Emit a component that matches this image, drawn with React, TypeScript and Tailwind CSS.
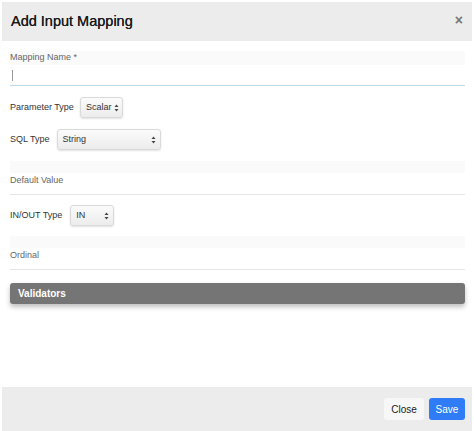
import React from "react";

function Arrows() {
  return (
    <svg width="5" height="8" viewBox="0 0 5 8" className="shrink-0">
      <path d="M2.5 0.5 L4.5 3 L0.5 3 Z" fill="#444" />
      <path d="M2.5 7.5 L4.5 5 L0.5 5 Z" fill="#444" />
    </svg>
  );
}

function Select({ value, w }: { value: string; w: string }) {
  return (
    <div
      className={`${w} h-[21px] shrink-0 flex items-center justify-between gap-[3px] pl-[5px] pr-[4px] rounded-[3px] border border-[#d9d9d9] bg-gradient-to-b from-[#fbfbfb] to-[#ececec] shadow-[0_1px_2px_rgba(0,0,0,0.12)] text-[9px] text-[#333]`}
    >
      <span className="whitespace-nowrap">{value}</span>
      <Arrows />
    </div>
  );
}

export default function App() {
  return (
    <div
      className="w-[474px] h-[431px] bg-white flex flex-col pt-[2px] px-[2px] text-[#444]"
      style={{ fontFamily: '"Liberation Sans", Arial, sans-serif' }}
    >
      <div className="h-[39px] shrink-0 bg-[#ececec] flex items-center justify-between pl-[9px] pr-[9px]">
        <span className="text-[14.5px] text-[#1a1a1a] [text-shadow:0_0_0.4px_#1a1a1a]">Add Input Mapping</span>
        <span className="text-[14px] font-bold text-[#777] leading-none -mt-[4px]">×</span>
      </div>

      <div className="flex-1 flex flex-col pl-[8px] pr-[7px]">
        <div className="mt-[10px] h-[14px] bg-[#fafafa] flex items-center text-[9px] text-[#666]">
          Mapping Name *
        </div>
        <div className="h-[21px] border-b border-[#bcdcee] flex items-center pl-[2px]">
          <div className="w-px h-[11px] bg-[#999]" />
        </div>

        <div className="mt-[11px] h-[21px] flex items-center gap-[6px] text-[9px] text-[#333]">
          <span>Parameter Type</span>
          <Select value="Scalar" w="w-[43px]" />
        </div>

        <div className="mt-[11px] h-[21px] flex items-center gap-[7px] text-[9px] text-[#333]">
          <span>SQL Type</span>
          <Select value="String" w="w-[104px]" />
        </div>

        <div className="mt-[11px] h-[12px] bg-[#fafafa]" />
        <div className="h-[22px] border-b border-[#e6e6e6] flex items-center pb-[5px] text-[9px] text-[#666]">
          Default Value
        </div>

        <div className="mt-[10px] h-[21px] flex items-center gap-[8px] text-[9px] text-[#333]">
          <span>IN/OUT Type</span>
          <Select value="IN" w="w-[44px]" />
        </div>

        <div className="mt-[10px] h-[12px] bg-[#fafafa]" />
        <div className="h-[22px] border-b border-[#e6e6e6] flex items-center pb-[5px] text-[9px] text-[#666]">
          Ordinal
        </div>

        <div className="mt-[13px] h-[21px] bg-[#757575] rounded-[3px] shadow-[0_3px_5px_rgba(0,0,0,0.25)] flex items-center pl-[8px] text-[10px] font-bold text-white">
          Validators
        </div>
      </div>

      <div className="h-[44px] shrink-0 bg-[#ececec] flex items-center justify-end gap-[5px] pr-[7px]">
        <div className="w-[40px] h-[22px] bg-[#f7f7f7] rounded-[3px] flex items-center justify-center text-[10px] text-[#222]">
          Close
        </div>
        <div className="w-[36px] h-[22px] bg-[#2f7cf6] rounded-[3px] flex items-center justify-center text-[10px] text-white">
          Save
        </div>
      </div>
    </div>
  );
}
